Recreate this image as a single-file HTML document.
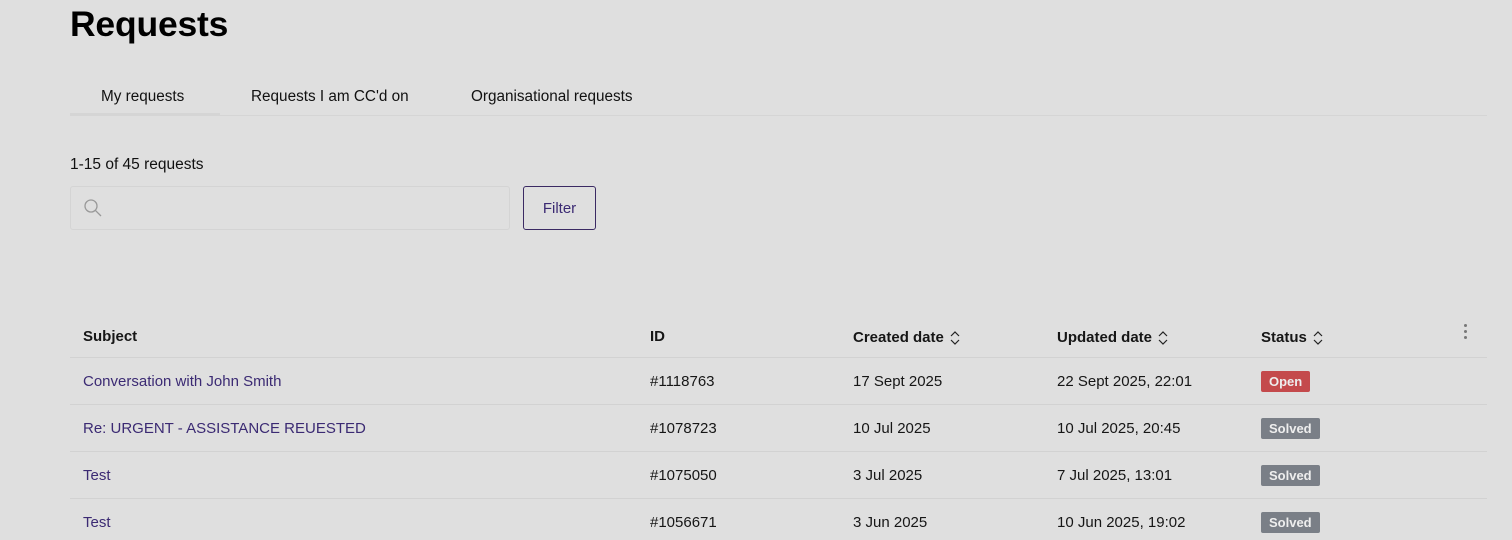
<!DOCTYPE html>
<html><head><meta charset="utf-8"><style>
*{margin:0;padding:0;box-sizing:border-box}
body{width:1512px;height:540px;background:#dfdfdf;font-family:"Liberation Sans",sans-serif;color:#111;position:relative;overflow:hidden}
.a{position:absolute;white-space:nowrap}
h1{position:absolute;left:70px;top:4px;font-size:35.5px;font-weight:bold;color:#000;letter-spacing:-0.2px}
.t{font-size:15.3px;top:88px}
.row{position:absolute;left:70px;width:1417px;height:1px;background:#d2d2d2}
.lnk{color:#3b2a73;font-size:15px}
.c{font-size:15px;color:#161616}
.h{font-size:15px;font-weight:bold;color:#161616}
.b{position:absolute;left:1261px;height:21px;border-radius:2px;color:#eee;font-size:13px;font-weight:bold;line-height:21px;padding:0 8px}
.sort{display:inline-block;vertical-align:middle;margin-left:6px}
</style></head><body>
<h1>Requests</h1>
<div class="a t" style="left:101px">My requests</div>
<div class="a t" style="left:251px">Requests I am CC'd on</div>
<div class="a t" style="left:471px">Organisational requests</div>
<div class="a" style="left:70px;top:113px;width:150px;height:3px;background:#d5d5d5"></div>
<div class="a" style="left:220px;top:115px;width:1267px;height:1px;background:#d5d5d5"></div>
<div class="a" style="left:70px;top:156px;font-size:15.5px">1-15 of 45 requests</div>
<div class="a" style="left:70px;top:186px;width:440px;height:44px;border:1px solid #d4d4d4;border-radius:3px"></div>
<svg class="a" style="left:83px;top:198px" width="20" height="20" viewBox="0 0 20 20"><circle cx="8" cy="8" r="6" fill="none" stroke="#999" stroke-width="1.3"/><line x1="12.3" y1="12.3" x2="18" y2="18" stroke="#999" stroke-width="1.3"/></svg>
<div class="a" style="left:523px;top:186px;width:73px;height:44px;border:1px solid #3b2a63;border-radius:3px;color:#3b2a73;font-size:15px;text-align:center;line-height:43px">Filter</div>

<div class="a h" style="left:83px;top:328px">Subject</div>
<div class="a h" style="left:650px;top:328px">ID</div>
<div class="a h" style="left:853px;top:329px">Created date<svg class="sort" width="10" height="14" viewBox="0 0 10 14"><path d="M1 5l4-4 4 4M1 9l4 4 4-4" fill="none" stroke="#222" stroke-width="1.2"/></svg></div>
<div class="a h" style="left:1057px;top:329px">Updated date<svg class="sort" width="10" height="14" viewBox="0 0 10 14"><path d="M1 5l4-4 4 4M1 9l4 4 4-4" fill="none" stroke="#222" stroke-width="1.2"/></svg></div>
<div class="a h" style="left:1261px;top:329px">Status<svg class="sort" width="10" height="14" viewBox="0 0 10 14"><path d="M1 5l4-4 4 4M1 9l4 4 4-4" fill="none" stroke="#222" stroke-width="1.2"/></svg></div>
<svg class="a" style="left:1463px;top:323px" width="5" height="18"><circle cx="2.5" cy="2.5" r="1.5" fill="#777"/><circle cx="2.5" cy="8.5" r="1.5" fill="#777"/><circle cx="2.5" cy="14.5" r="1.5" fill="#777"/></svg>
<div class="row" style="top:357px"></div>

<div class="a lnk" style="left:83px;top:373px">Conversation with John Smith</div>
<div class="a c" style="left:650px;top:373px">#1118763</div>
<div class="a c" style="left:853px;top:373px">17 Sept 2025</div>
<div class="a c" style="left:1057px;top:373px">22 Sept 2025, 22:01</div>
<div class="b" style="top:371px;background:#c44a4c">Open</div>
<div class="row" style="top:404px"></div>

<div class="a lnk" style="left:83px;top:420px">Re: URGENT - ASSISTANCE REUESTED</div>
<div class="a c" style="left:650px;top:420px">#1078723</div>
<div class="a c" style="left:853px;top:420px">10 Jul 2025</div>
<div class="a c" style="left:1057px;top:420px">10 Jul 2025, 20:45</div>
<div class="b" style="top:418px;background:#7a7f87">Solved</div>
<div class="row" style="top:451px"></div>

<div class="a lnk" style="left:83px;top:467px">Test</div>
<div class="a c" style="left:650px;top:467px">#1075050</div>
<div class="a c" style="left:853px;top:467px">3 Jul 2025</div>
<div class="a c" style="left:1057px;top:467px">7 Jul 2025, 13:01</div>
<div class="b" style="top:465px;background:#7a7f87">Solved</div>
<div class="row" style="top:498px"></div>

<div class="a lnk" style="left:83px;top:514px">Test</div>
<div class="a c" style="left:650px;top:514px">#1056671</div>
<div class="a c" style="left:853px;top:514px">3 Jun 2025</div>
<div class="a c" style="left:1057px;top:514px">10 Jun 2025, 19:02</div>
<div class="b" style="top:512px;background:#7a7f87">Solved</div>
</body></html>
